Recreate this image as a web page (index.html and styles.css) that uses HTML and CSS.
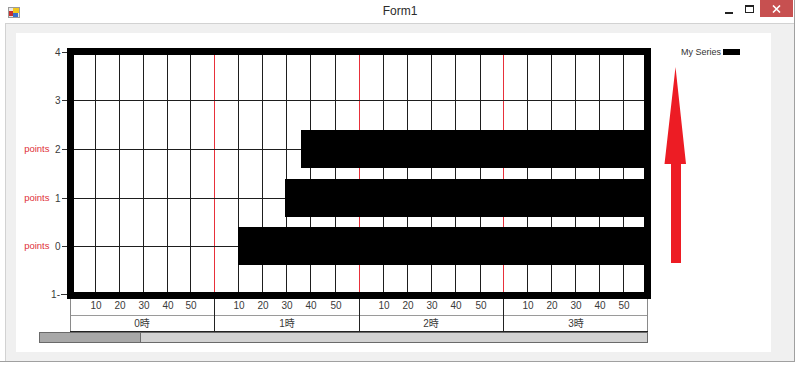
FILE: index.html
```html
<!DOCTYPE html>
<html lang="ja">
<head>
<meta charset="utf-8">
<title>Form1</title>
<link rel="stylesheet" href="styles.css">
</head>
<body>
<div class="window">
  <div class="titlebar">
    <div class="tb-left">
      <svg class="app-icon" width="12" height="11" viewBox="0 0 12 11">
        <rect x="0.5" y="0.5" width="11" height="10" fill="#e8e8e8" stroke="#9a9a9a"/>
        <rect x="1" y="4" width="4" height="5" fill="#c8302c"/>
        <rect x="5" y="1" width="6" height="5" fill="#f2c81e"/>
        <rect x="5" y="6" width="5" height="4" fill="#3a6fc8"/>
      </svg>
    </div>
    <div class="title">Form1</div>
    <div class="tb-right">
      <span class="btn btn-min"><svg width="8" height="2" viewBox="0 0 8 2"><rect width="8" height="2" fill="#222"/></svg></span>
      <span class="btn btn-max"><svg width="9" height="8" viewBox="0 0 9 8"><rect x="0.5" y="1" width="8" height="6.5" fill="none" stroke="#222" stroke-width="1"/><rect x="0" y="0" width="9" height="2" fill="#222"/></svg></span>
      <span class="btn btn-close"><svg width="9" height="8" viewBox="0 0 9 8"><path d="M1 0.5L8 7.5M8 0.5L1 7.5" stroke="#fff" stroke-width="1.6"/></svg></span>
    </div>
  </div>
  <div class="client">
    <div class="panel">
      <svg class="chart" width="755" height="299" viewBox="16 33 755 299" shape-rendering="crispEdges">
        <!-- plot background -->
        <rect x="70" y="51" width="578" height="244" fill="#fff"/>
        <!-- grid -->
        <path d="M95.5 55V292M119.5 55V292M143.5 55V292M167.5 55V292M190.5 55V292M238.5 55V292M262.5 55V292M286.5 55V292M310.5 55V292M335.5 55V292M383.5 55V292M407.5 55V292M431.5 55V292M455.5 55V292M480.5 55V292M527.5 55V292M551.5 55V292M575.5 55V292M599.5 55V292M623.5 55V292" stroke="#1e1e1e" stroke-width="1"/>
        <path d="M214.5 55V292M359.5 55V292M503.5 55V292" stroke="#e8303a" stroke-width="1"/>
        <path d="M74 100.5H645M74 149.5H645M74 198.5H645M74 246.5H645" stroke="#1e1e1e" stroke-width="1"/>
        <!-- bars -->
        <rect x="301" y="130" width="344" height="38" fill="#000"/>
        <rect x="285" y="179" width="360" height="38" fill="#000"/>
        <rect x="238" y="227" width="407" height="38" fill="#000"/>
        <!-- border -->
        <rect x="70.5" y="51.5" width="577" height="244" fill="none" stroke="#000" stroke-width="7"/>
        <!-- y ticks -->
        <path d="M62 52.5H67M62 100.5H67M62 149.5H67M62 198.5H67M62 246.5H67M61 294.5H67" stroke="#333" stroke-width="1"/>
        <g class="ylab">
          <text x="60.5" y="56">4</text>
          <text x="60.5" y="104">3</text>
          <text x="60.5" y="153">2</text>
          <text x="60.5" y="202">1</text>
          <text x="60.5" y="250">0</text>
          <text x="60" y="298">1-</text>
        </g>
        <g class="pts">
          <text x="49.5" y="152">points</text>
          <text x="49.5" y="201">points</text>
          <text x="49.5" y="249">points</text>
        </g>
        <!-- x labels -->
        <g class="xlab">
          <text x="96" y="309">10</text><text x="120" y="309">20</text><text x="144" y="309">30</text><text x="168" y="309">40</text><text x="191" y="309">50</text>
          <text x="239" y="309">10</text><text x="263" y="309">20</text><text x="287" y="309">30</text><text x="311" y="309">40</text><text x="336" y="309">50</text>
          <text x="384" y="309">10</text><text x="408" y="309">20</text><text x="432" y="309">30</text><text x="456" y="309">40</text><text x="481" y="309">50</text>
          <text x="528" y="309">10</text><text x="552" y="309">20</text><text x="576" y="309">30</text><text x="600" y="309">40</text><text x="624" y="309">50</text>
        </g>
        <!-- label table -->
        <path d="M70 315.5H648" stroke="#9a9a9a" stroke-width="1"/>
        <path d="M70.5 299V331M647.5 299V331" stroke="#8a8a8a" stroke-width="1"/>
        <path d="M214.5 299V331M359.5 299V331M503.5 299V331M70 331.5H648" stroke="#222" stroke-width="1"/>
        <g class="xlab">
          <text x="142" y="327">0時</text>
          <text x="287" y="327">1時</text>
          <text x="431" y="327">2時</text>
          <text x="576" y="327">3時</text>
        </g>
        <!-- legend -->
        <text class="legend" x="681" y="55">My Series</text>
        <rect x="723" y="49" width="17" height="6" fill="#000"/>
        <!-- arrow -->
        <polygon shape-rendering="geometricPrecision" points="675.5,67 686,164 681,164 681,263 671,263 671,164 664.5,164" fill="#ed1c24"/>
      </svg>
      <div class="hscroll"><div class="thumb"></div></div>
    </div>
  </div>
</div>
</body>
</html>
```

FILE: styles.css
```css
* {
  box-sizing: border-box;
  margin: 0;
  padding: 0;
}

body {
  margin: 0;
  width: 800px;
  height: 368px;
  overflow: hidden;
  background: #ffffff;
  font-family: "Liberation Sans", "Noto Sans CJK JP", Arial, sans-serif;
}

.window {
  width: 795px;
  height: 362px;
  display: flex;
  flex-direction: column;
  background: #ffffff;
  border-right: 1px solid #a0a0a0;
  border-bottom: 1px solid #a0a0a0;
}

.titlebar {
  height: 23px;
  flex: none;
  display: grid;
  grid-template-columns: 1fr auto 1fr;
  align-items: start;
  padding-left: 6px;
}

.tb-left {
  display: flex;
  padding-top: 7px;
  padding-left: 2px;
}

.app-icon {
  display: block;
}

.title {
  font-size: 12px;
  line-height: 22px;
  color: #2b2b2b;
}

.tb-right {
  justify-self: end;
  display: flex;
  padding-right: 1px;
}

.btn {
  display: flex;
  align-items: center;
  justify-content: center;
  height: 17px;
}

.btn svg {
  display: block;
}

.btn-min {
  width: 21px;
  align-items: flex-start;
  padding-top: 12px;
}

.btn-max {
  width: 21px;
  align-items: flex-start;
  padding-top: 5px;
}

.btn-close {
  width: 33px;
  background: #c75050;
}

.client {
  flex: 1;
  margin-left: 5px;
  background: #f0f0f0;
  border-top: 1px solid #d2d2d2;
  border-left: 1px solid #d2d2d2;
  padding: 9px 0 0 10px;
}

.panel {
  width: 755px;
  height: 319px;
  background: #ffffff;
  display: flex;
  flex-direction: column;
}

.chart {
  display: block;
  flex: none;
}

.chart text {
  font-family: "Liberation Sans", "Noto Sans CJK JP", Arial, sans-serif;
  font-size: 10px;
  fill: #3a3a3a;
}

.ylab text {
  text-anchor: end;
}

.pts text {
  text-anchor: end;
  font-size: 9.5px;
  fill: #e0303a;
}

.xlab text {
  text-anchor: middle;
}

.chart .legend {
  font-size: 9px;
  fill: #333333;
}

.hscroll {
  margin-left: 23px;
  width: 609px;
  height: 11px;
  background: #d2d2d2;
  border: 1px solid #6a6a6a;
  display: flex;
}

.thumb {
  width: 101px;
  height: 100%;
  background: #a8a8a8;
  border-right: 1px solid #6a6a6a;
}
```
